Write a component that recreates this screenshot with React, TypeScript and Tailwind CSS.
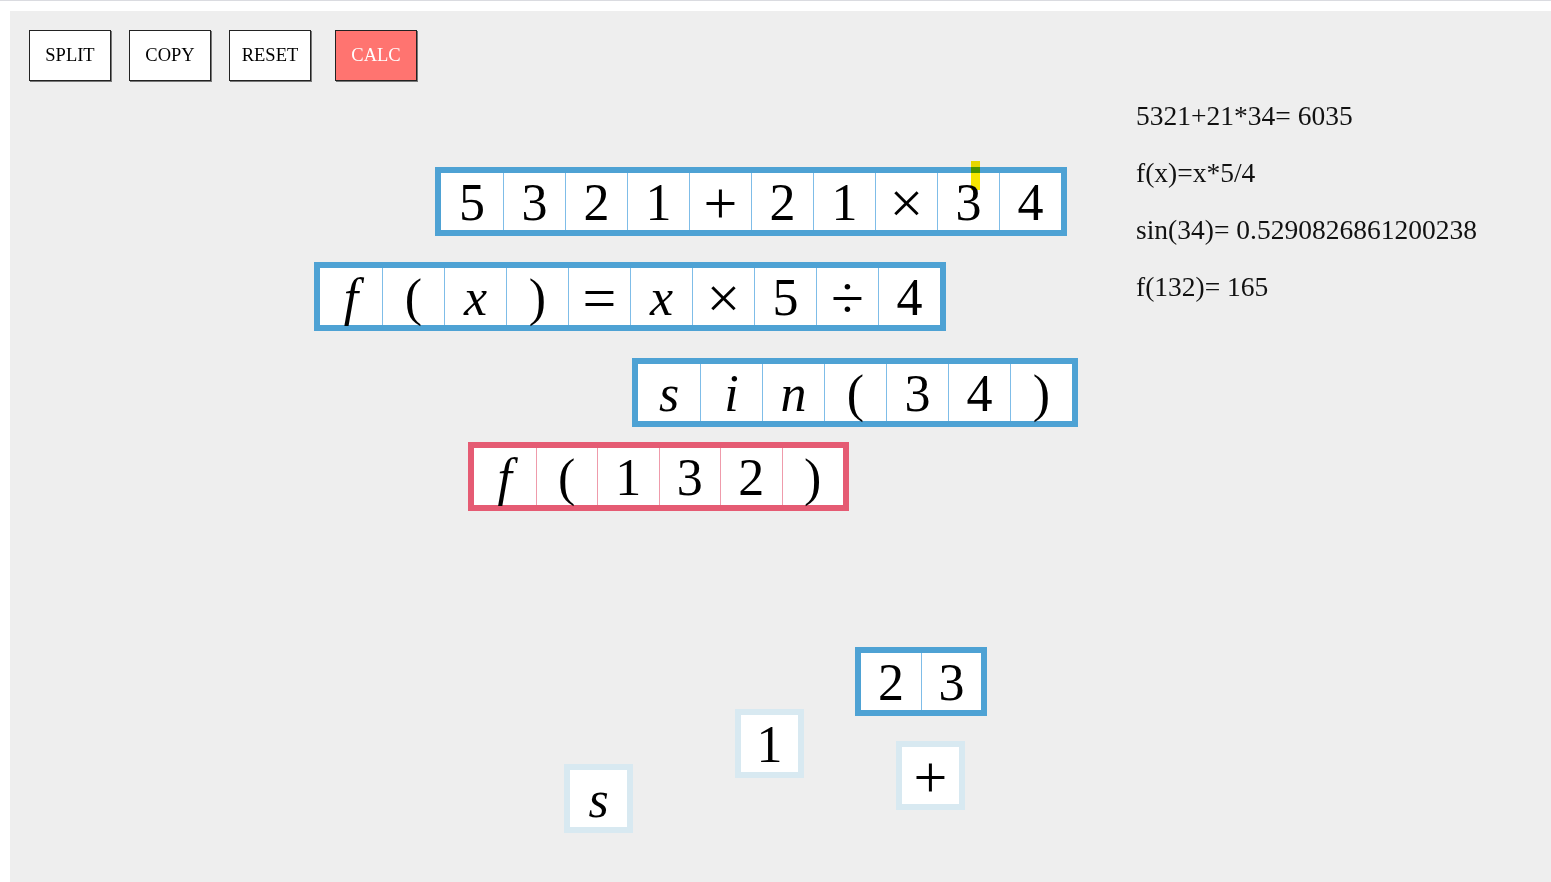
import React from "react";

type Glyph = { ch: string; it?: boolean; op?: boolean };

const g = (s: string): Glyph[] =>
  Array.from(s).map((ch) => ({ ch, it: /[a-z]/.test(ch), op: /[+×÷=]/.test(ch) }));

const Cell = ({ glyph, w, line }: { glyph: Glyph; w: string; line: string }) => (
  <div
    className={`flex h-[57px] items-center justify-center bg-white leading-none text-black ${w} ${line} ${
      glyph.it ? "italic" : ""
    } ${glyph.op ? "text-[60px]" : "text-[52px]"}`}
  >
    <span className="translate-y-[1px]">{glyph.ch}</span>
  </div>
);

const Strip = ({
  glyphs,
  className,
  red,
  w = "w-[62px]",
}: {
  glyphs: Glyph[];
  className: string;
  red?: boolean;
  w?: string;
}) => (
  <div className={`absolute flex border-[6px] ${red ? "border-[#e55b73]" : "border-[#4ea2d4]"} ${className}`}>
    {glyphs.map((gl, i) => (
      <Cell
        key={i}
        glyph={gl}
        w={w}
        line={i === 0 ? "" : red ? "border-l border-[#ef9bab]" : "border-l border-[#7fbde8]"}
      />
    ))}
  </div>
);

const Loose = ({ ch, it, op, className }: { ch: string; it?: boolean; op?: boolean; className: string }) => (
  <div
    className={`absolute flex h-[69px] w-[69px] items-center justify-center border-[6px] border-[#d8e9f1] bg-white leading-none text-black ${
      it ? "italic" : ""
    } ${op ? "text-[60px]" : "text-[52px]"} ${className}`}
  >
    <span className="translate-y-[1px]">{ch}</span>
  </div>
);

export default function App() {
  const rows = ["5321+21×34", "f(x)=x×5÷4", "sin(34)", "f(132)"];

  return (
    <div
      className="min-h-screen border-t border-[#dadbe0] bg-white pl-[10px] pt-[10px]"
      style={{ fontFamily: '"Liberation Serif", "Times New Roman", serif' }}
    >
      <div className="relative h-[871px] bg-[#eeeeee]">
        {/* toolbar */}
        <div className="flex px-[19px] pt-[19px]">
          <button className="h-[51px] w-[82px] border border-[#222] bg-white text-[18.5px] text-black shadow-[1px_1px_0_#777]">
            SPLIT
          </button>
          <button className="ml-[18px] h-[51px] w-[82px] border border-[#222] bg-white text-[18.5px] text-black shadow-[1px_1px_0_#777]">
            COPY
          </button>
          <button className="ml-[18px] h-[51px] w-[82px] border border-[#222] bg-white text-[18.5px] text-black shadow-[1px_1px_0_#777]">
            RESET
          </button>
          <button className="ml-[24px] h-[51px] w-[82px] border border-[#222] bg-[#ff7470] text-[18.5px] text-white shadow-[1px_1px_0_#777]">
            CALC
          </button>
        </div>

        {/* expression strips */}
        <Strip glyphs={g(rows[0])} className="left-[425px] top-[156px]" />
        <Strip glyphs={g(rows[1])} className="left-[304px] top-[251px]" />
        <Strip glyphs={g(rows[2])} className="left-[622px] top-[347px]" />
        <Strip glyphs={g(rows[3])} className="left-[458px] top-[431px]" red w="w-[61.5px]" />
        <Strip glyphs={g("23")} className="left-[845px] top-[636px]" w="w-[60px]" />

        {/* loose tiles */}
        <Loose ch="1" className="left-[725px] top-[698px]" />
        <Loose ch="s" it className="left-[554px] top-[753px]" />
        <Loose ch="+" op className="left-[886px] top-[730px]" />

        {/* cursor marker */}
        <div className="absolute left-[961px] top-[150px] h-[29px] w-[9px] bg-[#f7e600] mix-blend-multiply" />

        {/* results */}
        <div className="absolute left-[1126px] top-[76px] flex flex-col text-[27.5px] leading-[57px] text-[#111]">
          <div>5321+21*34= 6035</div>
          <div>f(x)=x*5/4</div>
          <div>sin(34)= 0.5290826861200238</div>
          <div>f(132)= 165</div>
        </div>
      </div>
    </div>
  );
}
